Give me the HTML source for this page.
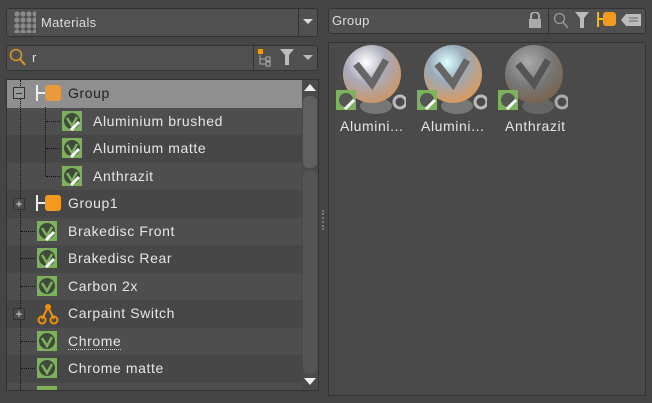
<!DOCTYPE html>
<html><head><style>
*{margin:0;padding:0;box-sizing:border-box}
body{width:652px;height:403px;background:#454545;font-family:"Liberation Sans",sans-serif;font-size:14px;color:#e6e6e6;position:relative;overflow:hidden;letter-spacing:0.6px}
.abs{position:absolute}
.box{border:1px solid #333;border-radius:3px;background:#4c4c4c}
.row{position:absolute;left:8px;width:294px;height:27.5px}
.dots{position:absolute;border-top:1px dotted #111;height:0;top:14px}
</style></head><body>
<div class="abs box" style="left:6px;top:8px;width:312px;height:29px;background:#505050"></div>
<svg class="abs" style="left:14px;top:11px" width="22" height="22"><g fill="#8a8a8a"><circle cx="3" cy="3" r="2.6"/><circle cx="9" cy="3" r="2.6"/><circle cx="15" cy="3" r="2.6"/><circle cx="21" cy="3" r="2.6"/><circle cx="3" cy="9" r="2.6"/><circle cx="9" cy="9" r="2.6"/><circle cx="15" cy="9" r="2.6"/><circle cx="21" cy="9" r="2.6"/><circle cx="3" cy="15" r="2.6"/><circle cx="9" cy="15" r="2.6"/><circle cx="15" cy="15" r="2.6"/><circle cx="21" cy="15" r="2.6"/><circle cx="3" cy="21" r="2.6"/><circle cx="9" cy="21" r="2.6"/><circle cx="15" cy="21" r="2.6"/><circle cx="21" cy="21" r="2.6"/></g></svg>
<div class="abs" style="left:41px;top:15px;font-size:13px;color:#ddd;letter-spacing:0.3px">Materials</div>
<div class="abs" style="left:298px;top:9px;width:1px;height:27px;background:#333"></div>
<svg class="abs" style="left:303px;top:19px" width="10" height="6"><path d="M0 0H10L5 5Z" fill="#ddd"/></svg>
<div class="abs box" style="left:6px;top:45px;width:312px;height:26px;background:#505050"></div>
<svg class="abs" style="left:9px;top:48px" width="18" height="19"><circle cx="7" cy="7" r="5.5" fill="none" stroke="#d9982a" stroke-width="1.5"/><path d="M11 11L16 17" stroke="#d9982a" stroke-width="2"/></svg>
<div class="abs" style="left:32px;top:50px;font-size:13px;color:#ddd">r</div>
<div class="abs" style="left:253px;top:46px;width:1px;height:24px;background:#333"></div>
<div class="abs" style="left:258px;top:49px;width:5px;height:5px;background:#f59a00"></div>
<svg class="abs" style="left:258px;top:49px" width="16" height="18"><path d="M2 6V15H8M2 10H8" stroke="#aaa" fill="none"/><rect x="8" y="8" width="4" height="4" fill="none" stroke="#aaa"/><rect x="8" y="13" width="4" height="4" fill="none" stroke="#aaa"/></svg>
<svg class="abs" style="left:280px;top:49px" width="14" height="16"><path d="M0 0H14L9 6V16H5V6Z" fill="#bbb"/></svg>
<svg class="abs" style="left:303px;top:55px" width="10" height="6"><path d="M0 0H10L5 5Z" fill="#bbb"/></svg>
<div class="abs" style="left:6px;top:79px;width:313px;height:312px;border:1px solid #333;background:#4a4a4a"></div>
<div class="abs" style="left:7px;top:80px;width:311px;height:310px;overflow:hidden">
 <div class="row" style="left:0;top:0;width:295px;background:#8f8f8f"></div>
 <div class="row" style="left:0;top:27.5px;width:295px;background:#4e4e4e"></div>
 <div class="row" style="left:0;top:55px;width:295px;background:#474747"></div>
 <div class="row" style="left:0;top:82.5px;width:295px;background:#4e4e4e"></div>
 <div class="row" style="left:0;top:110px;width:295px;background:#474747"></div>
 <div class="row" style="left:0;top:137.5px;width:295px;background:#4e4e4e"></div>
 <div class="row" style="left:0;top:165px;width:295px;background:#474747"></div>
 <div class="row" style="left:0;top:192.5px;width:295px;background:#4e4e4e"></div>
 <div class="row" style="left:0;top:220px;width:295px;background:#474747"></div>
 <div class="row" style="left:0;top:247.5px;width:295px;background:#4e4e4e"></div>
 <div class="row" style="left:0;top:275px;width:295px;background:#474747"></div>
 <div class="row" style="left:0;top:302.5px;width:295px;background:#4e4e4e"></div>
 <div class="abs" style="left:13px;top:0;height:310px;border-left:1px dotted #111"></div>
 <div class="abs" style="left:38px;top:27px;height:69px;border-left:1px dotted #111"></div>
</div>
<svg width="0" height="0" style="position:absolute"><defs>
<symbol id="m" viewBox="0 0 20 20"><rect width="20" height="20" fill="#7cb25c"/><circle cx="10" cy="10" r="8" fill="#3f4a3a"/><path d="M5 7L10 15L15 6" stroke="#7cb25c" stroke-width="2.5" fill="none"/></symbol>
<symbol id="me" viewBox="0 0 20 20"><rect width="20" height="20" fill="#7cb25c"/><circle cx="10" cy="10" r="8" fill="#3f4a3a"/><path d="M5 7L10 15L15 6" stroke="#7cb25c" stroke-width="2.5" fill="none"/><path d="M9 19L17 11" stroke="#fff" stroke-width="3"/></symbol>
</defs></svg>
<div class="abs" style="left:13px;top:87px;width:12px;height:12px;border:1px solid #333;background:#999"><div style="position:absolute;left:2px;top:5px;width:6px;height:1px;background:#333"></div></div>
<div class="abs" style="left:36px;top:85px;width:2px;height:16px;background:#eee"></div><div class="abs" style="left:36px;top:92px;width:9px;height:2px;background:#eee"></div>
<div class="abs" style="left:45px;top:85px;width:16px;height:16px;background:#e89a3c;border-radius:3px"></div>
<div class="abs" style="left:68px;top:85px;color:#222">Group</div>
<div class="dots" style="left:46px;top:121px;width:14px"></div>
<div class="dots" style="left:46px;top:148px;width:14px"></div>
<div class="dots" style="left:46px;top:176px;width:14px"></div>
<svg class="abs" style="left:62px;top:111px" width="20" height="20"><use href="#me"/></svg>
<div class="abs" style="left:93px;top:113px">Aluminium brushed</div>
<svg class="abs" style="left:62px;top:138px" width="20" height="20"><use href="#me"/></svg>
<div class="abs" style="left:93px;top:140px">Aluminium matte</div>
<svg class="abs" style="left:62px;top:166px" width="20" height="20"><use href="#me"/></svg>
<div class="abs" style="left:93px;top:168px">Anthrazit</div>
<div class="abs" style="left:13px;top:198px;width:12px;height:12px;border:1px solid #333;background:#4a4a4a;color:#ddd;font-size:12px;line-height:10px;text-align:center;letter-spacing:0">+</div>
<div class="abs" style="left:36px;top:195px;width:2px;height:16px;background:#eee"></div><div class="abs" style="left:36px;top:202px;width:9px;height:2px;background:#eee"></div>
<div class="abs" style="left:45px;top:195px;width:16px;height:16px;background:#f39a1e;border-radius:3px"></div>
<div class="abs" style="left:68px;top:195px">Group1</div>
<div class="dots" style="left:21px;top:231px;width:14px"></div>
<div class="dots" style="left:21px;top:258px;width:14px"></div>
<div class="dots" style="left:21px;top:286px;width:14px"></div>
<div class="dots" style="left:21px;top:341px;width:14px"></div>
<div class="dots" style="left:21px;top:368px;width:14px"></div>
<svg class="abs" style="left:37px;top:221px" width="20" height="20"><use href="#me"/></svg>
<div class="abs" style="left:68px;top:223px">Brakedisc Front</div>
<svg class="abs" style="left:37px;top:248px" width="20" height="20"><use href="#me"/></svg>
<div class="abs" style="left:68px;top:250px">Brakedisc Rear</div>
<svg class="abs" style="left:37px;top:276px" width="20" height="20"><use href="#m"/></svg>
<div class="abs" style="left:68px;top:278px">Carbon 2x</div>
<div class="abs" style="left:13px;top:308px;width:12px;height:12px;border:1px solid #333;background:#4a4a4a;color:#ddd;font-size:12px;line-height:10px;text-align:center;letter-spacing:0">+</div>
<svg class="abs" style="left:37px;top:303px" width="22" height="22"><circle cx="11" cy="4" r="3" fill="#f0900a"/><path d="M11 4L5 16M11 4L17 16" stroke="#f0900a" stroke-width="2"/><circle cx="5" cy="17" r="3.5" fill="none" stroke="#f0900a" stroke-width="2"/><circle cx="17" cy="17" r="3.5" fill="none" stroke="#f0900a" stroke-width="2"/></svg>
<div class="abs" style="left:68px;top:305px">Carpaint Switch</div>
<svg class="abs" style="left:37px;top:331px" width="20" height="20"><use href="#m"/></svg>
<div class="abs" style="left:68px;top:333px;border-bottom:1px dotted #ccc;line-height:16px">Chrome</div>
<svg class="abs" style="left:37px;top:358px" width="20" height="20"><use href="#m"/></svg>
<div class="abs" style="left:68px;top:360px">Chrome matte</div>
<svg class="abs" style="left:37px;top:386px" width="20" height="4"><rect width="20" height="4" fill="#7cb25c"/></svg>
<div class="abs" style="left:302px;top:80px;width:16px;height:310px;background:#4a4a4a"></div>
<svg class="abs" style="left:304px;top:84px" width="12" height="7"><path d="M0 7H12L6 0Z" fill="#eee"/></svg>
<div class="abs" style="left:303px;top:96px;width:14px;height:72px;background:#606060;border-radius:6px"></div>
<div class="abs" style="left:303px;top:170px;width:14px;height:204px;background:#555;border-radius:6px"></div>
<svg class="abs" style="left:304px;top:378px" width="12" height="7"><path d="M0 0H12L6 7Z" fill="#eee"/></svg>
<div class="abs" style="left:322px;top:210px;width:2px;height:20px;border-left:2px dotted #777"></div>
<div class="abs box" style="left:328px;top:8px;width:318px;height:26px;background:#505050"></div>
<div class="abs" style="left:332px;top:13px;font-size:13px;color:#ddd;letter-spacing:0.3px">Group</div>
<svg class="abs" style="left:528px;top:12px" width="14" height="16"><path d="M3 7V4a4 4 0 0 1 8 0V7" stroke="#aaa" stroke-width="2" fill="none"/><rect x="1" y="7" width="12" height="9" fill="#aaa"/></svg>
<div class="abs" style="left:548px;top:9px;width:1px;height:24px;background:#333"></div>
<svg class="abs" style="left:553px;top:12px" width="16" height="18"><circle cx="6.5" cy="6.5" r="5" fill="none" stroke="#999" stroke-width="1.3"/><path d="M10 10L15 16" stroke="#999" stroke-width="1.5"/></svg>
<svg class="abs" style="left:575px;top:12px" width="14" height="16"><path d="M0 0H14L9 6V16H5V6Z" fill="#bbb"/></svg>
<div class="abs" style="left:597px;top:12px;width:2px;height:15px;background:#f5b800"></div><div class="abs" style="left:597px;top:18px;width:6px;height:2px;background:#f5b800"></div>
<div class="abs" style="left:603px;top:12px;width:13px;height:14px;background:#f39a1e;border-radius:3px"></div>
<svg class="abs" style="left:621px;top:14px" width="20" height="12"><path d="M5 0H20V12H5L0 6Z" fill="#bbb"/><path d="M8 4H17M8 7H17" stroke="#666"/></svg>
<div class="abs" style="left:328px;top:42px;width:318px;height:354px;border:1px solid #333;background:#4a4a4a"></div>
<svg width="0" height="0" style="position:absolute"><defs>
<radialGradient id="g1" cx="0.4" cy="0.3" r="0.7"><stop offset="0" stop-color="#fff"/><stop offset="0.5" stop-color="#aab"/><stop offset="1" stop-color="#c9976a"/></radialGradient>
<radialGradient id="g2" cx="0.4" cy="0.3" r="0.7"><stop offset="0" stop-color="#dff"/><stop offset="0.45" stop-color="#9ab"/><stop offset="1" stop-color="#d89a60"/></radialGradient>
<radialGradient id="g3" cx="0.4" cy="0.3" r="0.7"><stop offset="0" stop-color="#aaa"/><stop offset="0.6" stop-color="#777"/><stop offset="1" stop-color="#7a6450"/></radialGradient>
</defs></svg>
<svg class="abs" style="left:336px;top:44px" width="70" height="72"><ellipse cx="40" cy="62" rx="16" ry="8" fill="#777"/><circle cx="64" cy="58" r="6" fill="none" stroke="#bbb" stroke-width="3"/><circle cx="36" cy="30" r="29" fill="url(#g1)"/><path d="M20 20L36 40L50 16" stroke="#666" stroke-width="7" fill="none"/><rect x="0" y="46" width="20" height="20" fill="#7cb25c"/><circle cx="10" cy="56" r="7" fill="#555"/><path d="M9 65L18 56" stroke="#fff" stroke-width="3"/></svg>
<svg class="abs" style="left:417px;top:44px" width="70" height="72"><ellipse cx="40" cy="62" rx="16" ry="8" fill="#777"/><circle cx="64" cy="58" r="6" fill="none" stroke="#bbb" stroke-width="3"/><circle cx="36" cy="30" r="29" fill="url(#g2)"/><path d="M20 20L36 40L50 16" stroke="#666" stroke-width="7" fill="none"/><rect x="0" y="46" width="20" height="20" fill="#7cb25c"/><circle cx="10" cy="56" r="7" fill="#555"/><path d="M9 65L18 56" stroke="#fff" stroke-width="3"/></svg>
<svg class="abs" style="left:498px;top:44px" width="70" height="72"><ellipse cx="40" cy="62" rx="16" ry="8" fill="#666"/><circle cx="64" cy="58" r="6" fill="none" stroke="#aaa" stroke-width="3"/><circle cx="36" cy="30" r="29" fill="url(#g3)"/><path d="M20 20L36 40L50 16" stroke="#555" stroke-width="7" fill="none"/><rect x="0" y="46" width="20" height="20" fill="#7cb25c"/><circle cx="10" cy="56" r="7" fill="#555"/><path d="M9 65L18 56" stroke="#fff" stroke-width="3"/></svg>
<div class="abs" style="left:340px;top:118px">Alumini...</div>
<div class="abs" style="left:421px;top:118px">Alumini...</div>
<div class="abs" style="left:505px;top:118px">Anthrazit</div>
</body></html>
